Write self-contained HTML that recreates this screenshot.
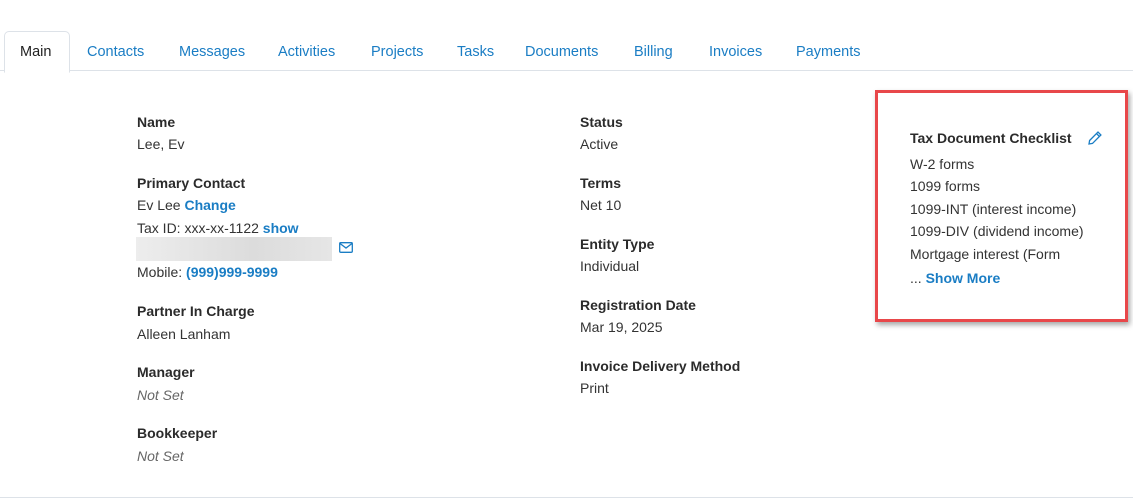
<!DOCTYPE html>
<html><head><style>
body{margin:0;width:1133px;height:502px;background:#fff;font-family:"Liberation Sans",sans-serif;font-size:14px;color:#333;position:relative;overflow:hidden}
.a{position:absolute;white-space:nowrap}
.tab{position:absolute;top:44px;color:#1a7dc4;font-size:14.5px}
.b{font-weight:bold;color:#2b2b2b}
.l{color:#1a7dc4}
.lb{color:#1a7dc4;font-weight:bold}
i{color:#666}
</style></head><body>
<div class="a" style="left:0;top:70px;width:1133px;height:1px;background:#dde2e8"></div>
<div class="a" style="left:4px;top:31px;width:64px;height:40px;border:1px solid #dde2e8;border-bottom:1px solid #fff;border-radius:5px 5px 0 0;background:#fff"></div>
<div class="tab" style="left:20px;color:#222">Main</div>
<div class="tab" style="left:87px">Contacts</div>
<div class="tab" style="left:179px">Messages</div>
<div class="tab" style="left:278px">Activities</div>
<div class="tab" style="left:371px">Projects</div>
<div class="tab" style="left:457px">Tasks</div>
<div class="tab" style="left:525px">Documents</div>
<div class="tab" style="left:634px">Billing</div>
<div class="tab" style="left:709px">Invoices</div>
<div class="tab" style="left:796px">Payments</div>

<div class="a b" style="left:137px;top:114px">Name</div>
<div class="a" style="left:137px;top:136px">Lee, Ev</div>
<div class="a b" style="left:137px;top:175px">Primary Contact</div>
<div class="a" style="left:137px;top:197px">Ev Lee <span class="lb">Change</span></div>
<div class="a" style="left:137px;top:220px">Tax ID: xxx-xx-1122 <span class="lb">show</span></div>
<div class="a" style="left:136px;top:237px;width:196px;height:24px;background:linear-gradient(90deg,#ededed,#dcdcdc 60%,#e6e6e6)"></div>
<svg class="a" style="left:339px;top:242px" width="14" height="11" viewBox="0 0 14 11"><rect x="0.7" y="0.7" width="12.6" height="9.6" rx="1" fill="none" stroke="#1a7dc4" stroke-width="1.3"/><path d="M1 1.5L7 6L13 1.5" fill="none" stroke="#1a7dc4" stroke-width="1.3"/></svg>
<div class="a" style="left:137px;top:264px">Mobile: <span class="lb">(999)999-9999</span></div>
<div class="a b" style="left:137px;top:303px">Partner In Charge</div>
<div class="a" style="left:137px;top:326px">Alleen Lanham</div>
<div class="a b" style="left:137px;top:364px">Manager</div>
<div class="a" style="left:137px;top:387px"><i>Not Set</i></div>
<div class="a b" style="left:137px;top:425px">Bookkeeper</div>
<div class="a" style="left:137px;top:448px"><i>Not Set</i></div>

<div class="a b" style="left:580px;top:114px">Status</div>
<div class="a" style="left:580px;top:136px">Active</div>
<div class="a b" style="left:580px;top:175px">Terms</div>
<div class="a" style="left:580px;top:197px">Net 10</div>
<div class="a b" style="left:580px;top:236px">Entity Type</div>
<div class="a" style="left:580px;top:258px">Individual</div>
<div class="a b" style="left:580px;top:297px">Registration Date</div>
<div class="a" style="left:580px;top:319px">Mar 19, 2025</div>
<div class="a b" style="left:580px;top:358px">Invoice Delivery Method</div>
<div class="a" style="left:580px;top:380px">Print</div>

<div class="a" style="left:875px;top:90px;width:247px;height:226px;border:3px solid #e8474a;box-shadow:2px 3px 5px rgba(0,0,0,.35)"></div>
<div class="a b" style="left:910px;top:130px">Tax Document Checklist</div>
<svg class="a" style="left:1087px;top:130px" width="16" height="16" viewBox="0 0 16 16"><path d="M2 14L2.6 10.5L11 2.1L13.9 5L5.5 13.4Z M9.5 3.6L12.4 6.5" fill="none" stroke="#1a7dc4" stroke-width="1.3"/></svg>
<div class="a" style="left:910px;top:156px">W-2 forms</div>
<div class="a" style="left:910px;top:178px">1099 forms</div>
<div class="a" style="left:910px;top:201px">1099-INT (interest income)</div>
<div class="a" style="left:910px;top:223px">1099-DIV (dividend income)</div>
<div class="a" style="left:910px;top:246px">Mortgage interest (Form</div>
<div class="a" style="left:910px;top:270px">... <span class="lb">Show More</span></div>

<div class="a" style="left:0;top:497px;width:1133px;height:1px;background:#dde2e8"></div>
</body></html>
